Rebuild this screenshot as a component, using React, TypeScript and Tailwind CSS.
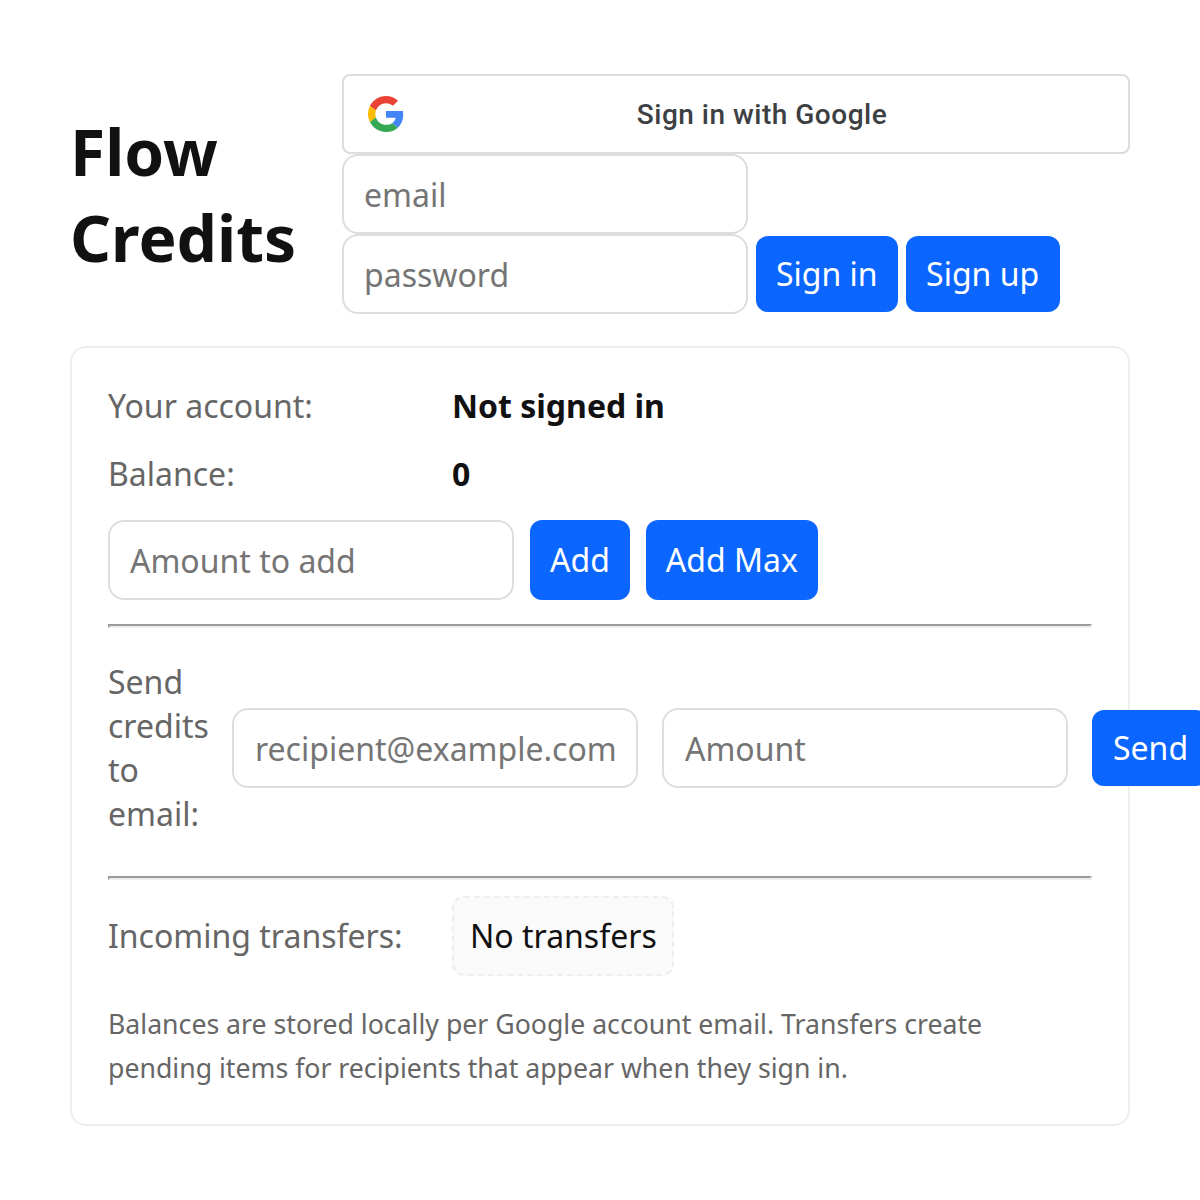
const inputBase =
  'w-[406px] h-20 shrink-0 rounded-2xl border-2 border-[#dddddd] bg-white text-[32px] text-[#111111] outline-none placeholder:text-[#757575]';
const btnClass = 'rounded-xl bg-[#0b66ff] px-5 text-[32px] text-white';
const hrClass = 'h-0 border-2 border-t-[#9a9a9a] border-l-[#9a9a9a] border-b-[#eeeeee] border-r-[#eeeeee]';

function GoogleLogo() {
  return (
    <svg viewBox="0 0 48 48" className="w-9 h-9 shrink-0">
      <path fill="#EA4335" d="M24 9.5c3.54 0 6.71 1.22 9.21 3.6l6.85-6.85C35.9 2.38 30.47 0 24 0 14.62 0 6.51 5.38 2.56 13.22l7.98 6.19C12.43 13.72 17.74 9.5 24 9.5z" />
      <path fill="#4285F4" d="M46.98 24.55c0-1.57-.15-3.09-.38-4.55H24v9.02h12.94c-.58 2.96-2.26 5.48-4.78 7.18l7.73 6c4.51-4.18 7.09-10.36 7.09-17.65z" />
      <path fill="#FBBC05" d="M10.53 28.59c-.48-1.45-.76-2.99-.76-4.59s.27-3.14.76-4.59l-7.98-6.19C.92 16.46 0 20.12 0 24c0 3.88.92 7.54 2.56 10.78l7.97-6.19z" />
      <path fill="#34A853" d="M24 48c6.48 0 11.93-2.13 15.89-5.81l-7.73-6c-2.15 1.45-4.92 2.3-8.16 2.3-6.26 0-11.57-4.22-13.47-9.91l-7.98 6.19C6.51 42.62 14.62 48 24 48z" />
    </svg>
  );
}

export default function App() {
  return (
    <div className="w-[1200px] h-[1200px] overflow-hidden bg-white px-[70px] pt-[74px] font-['Noto_Sans',sans-serif] text-[#111111]">
      {/* Header */}
      <header className="flex items-center">
        <h1 className="w-[272px] shrink-0 text-[64px] font-bold leading-[86px] pt-[2px]">Flow Credits</h1>
        <div className="flex flex-col">
          <button className="flex items-center w-[788px] h-20 rounded-lg border-2 border-[#dadce0] bg-white pl-6 pr-2">
            <GoogleLogo />
            <span className="flex-1 pt-[2px] text-center font-['Roboto',sans-serif] font-medium text-[28px] tracking-[0.5px] text-[#3c4043]">
              Sign in with Google
            </span>
          </button>
          <input className={`${inputBase} px-5`} placeholder="email" />
          <div className="flex items-center gap-2">
            <input className={`${inputBase} px-5`} placeholder="password" />
            <button className={`${btnClass} h-[76px]`}>Sign in</button>
            <button className={`${btnClass} w-[154px] h-[76px]`}>Sign up</button>
          </div>
        </div>
      </header>

      {/* Card */}
      <section className="mt-8 w-[1060px] rounded-2xl border-2 border-[#eeeeee] bg-white px-9 pt-9 pb-[34px]">
        <div className="flex items-center leading-[44px] text-[32px]">
          <span className="w-[344px] text-[#666666]">Your account:</span>
          <strong className="font-bold">Not signed in</strong>
        </div>
        <div className="flex items-center mt-6 leading-[44px] text-[32px]">
          <span className="w-[344px] text-[#666666]">Balance:</span>
          <strong className="font-bold">0</strong>
        </div>
        <div className="flex gap-4 mt-6">
          <input className={`${inputBase} px-5`} placeholder="Amount to add" />
          <button className={`${btnClass} h-20`}>Add</button>
          <button className={`${btnClass} h-20`}>Add Max</button>
        </div>

        <hr className={`mt-6 ${hrClass}`} />

        <div className="flex items-center gap-6 mt-8">
          <span className="w-[100px] shrink-0 text-[32px] leading-[44px] text-[#666666]">Send credits to email:</span>
          <input className={`${inputBase} px-[21px]`} placeholder="recipient@example.com" />
          <input className={`${inputBase} px-[21px]`} placeholder="Amount" />
          <button className="h-[76px] shrink-0 rounded-xl bg-[#0b66ff] pl-[21px] pr-5 text-[32px] text-white">Send</button>
        </div>

        <hr className={`mt-10 ${hrClass}`} />

        <div className="flex items-center mt-4">
          <span className="w-[344px] text-[32px] leading-[44px] text-[#666666]">Incoming transfers:</span>
          <div className="flex items-center h-20 rounded-xl border-2 border-dashed border-[#eeeeee] bg-[#fafafa] pl-4 pr-[15px] text-[32px]">
            No transfers
          </div>
        </div>

        <p className="mt-[26px] text-[26.67px] leading-[44px] text-[#666666]">
          Balances are stored locally per Google account email. Transfers create pending items for recipients that appear when they sign in.
        </p>
      </section>
    </div>
  );
}
